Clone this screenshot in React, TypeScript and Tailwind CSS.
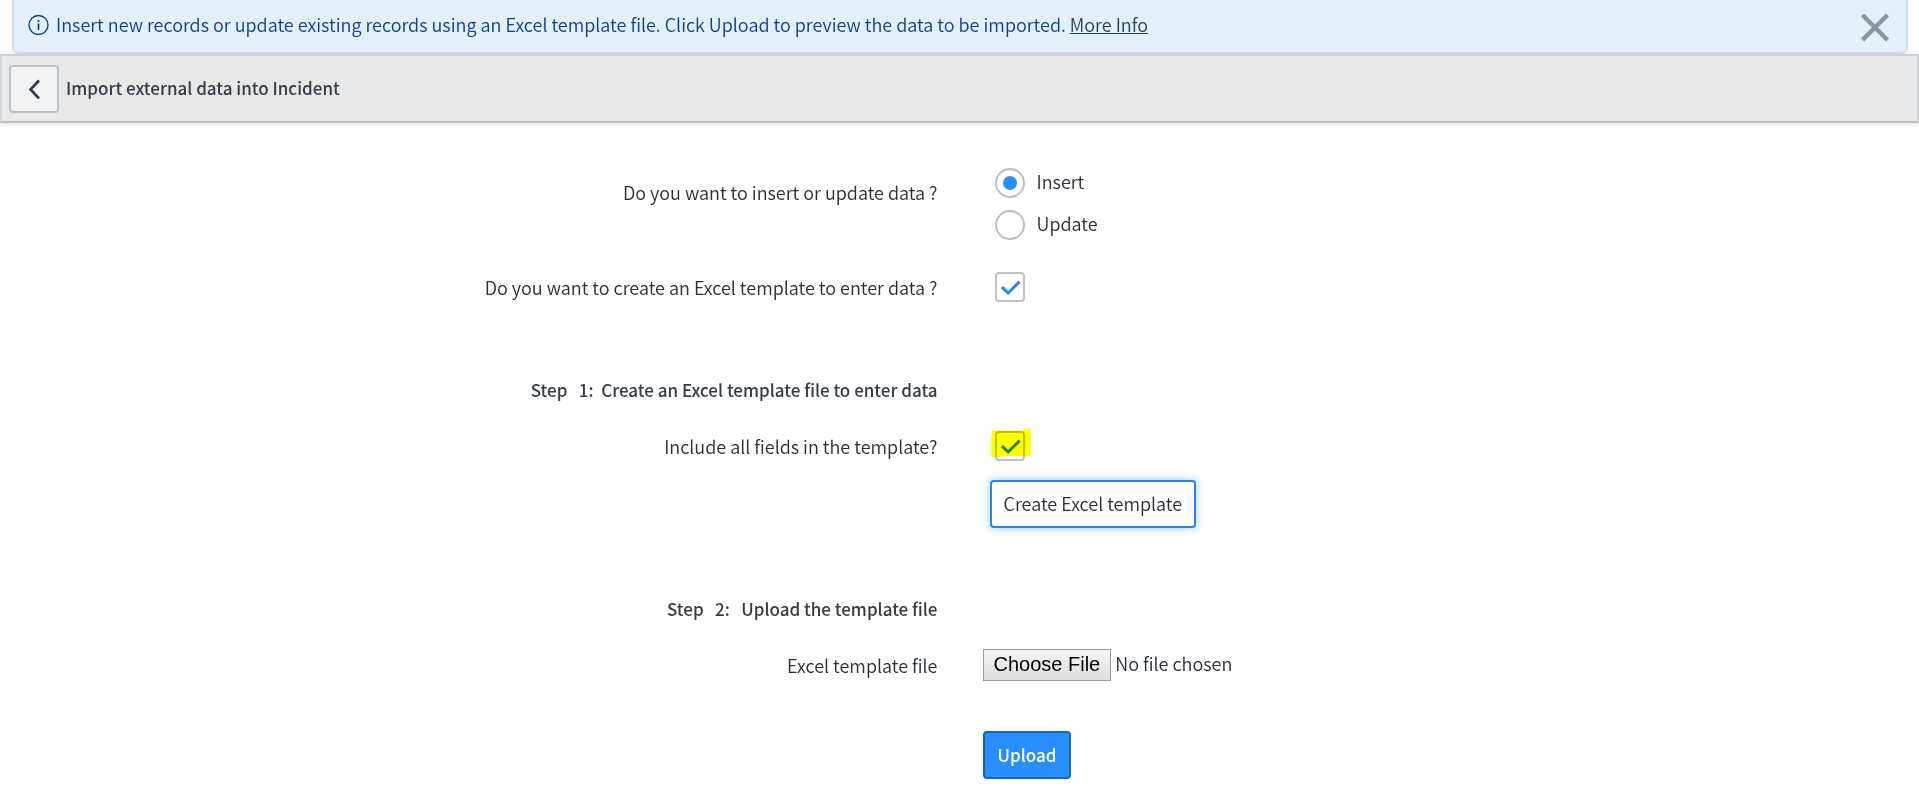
import React, { useState } from 'react';

interface CheckboxProps {
    id: string;
    checked: boolean;
    onToggle: () => void;
    highlighted?: boolean;
}

const Checkbox: React.FC<CheckboxProps> = ({ id, checked, onToggle, highlighted }) => {
    return (
        <span className="relative block h-[30px] w-[30px]">
            <input id={id} type="checkbox" checked={checked} onChange={onToggle}
                className="block h-[30px] w-[30px] cursor-pointer appearance-none rounded border-2 border-[#bdc0c4] bg-white" />
            {checked && (
                <svg viewBox="0 0 30 30" className="pointer-events-none absolute inset-0 h-[30px] w-[30px]" fill="none" stroke="#2d83ee" strokeWidth="3">
                    <path d="M7 15.2 L13.2 21 L24.6 9.6" />
                </svg>
            )}
            {highlighted && (
                <svg viewBox="0 0 40 28" className="pointer-events-none absolute -left-1 -top-0.5 h-7 w-10 mix-blend-multiply">
                    <path d="M1 1.5 H31 L33 0 H39.500 Q40.500 14 39.500 27 H12 L9 28 H0.500 Q-0.500 14 1 1.500Z" fill="#ffff00" />
                </svg>
            )}
        </span>
    );
};

interface RowProps {
    label: React.ReactNode;
    htmlFor?: string;
    children?: React.ReactNode;
}

const Row: React.FC<RowProps> = ({ label, htmlFor, children }) => (
    <div className="grid min-h-8 grid-cols-2 items-center">
        <label htmlFor={htmlFor} className="pr-[22px] text-right">{label}</label>
        <div className="pl-[23px]">{children}</div>
    </div>
);

const App: React.FC = () => {
    const [mode, setMode] = useState<string>('insert');
    const [createTemplate, setCreateTemplate] = useState<boolean>(true);
    const [allFields, setAllFields] = useState<boolean>(true);

    const modes = [
        { value: 'insert', text: 'Insert' },
        { value: 'update', text: 'Update' },
    ];

    return (
        <div className="min-h-screen bg-white font-['Noto_Sans_CJK_SC',sans-serif] text-[18px] font-[350] leading-6 text-[#262e38]">
            <div className="ml-3 mr-[11px] flex h-[54px] items-start justify-between rounded-b-md border-2 border-t-0 border-[#cfe0f5] bg-[#e4effa] pl-[14px] pr-4 text-[#0c3f8f]">
                <p className="flex items-center gap-[7px] pt-3">
                    <svg viewBox="0 0 21 21" className="h-[21px] w-[21px]" fill="none" stroke="currentColor">
                        <circle cx="10.500" cy="11" r="9.500" strokeWidth="1.300" />
                        <path d="M10.500 9.500 V16" strokeWidth="1.700" />
                        <path d="M10.500 6 V8" strokeWidth="1.700" />
                    </svg>
                    <span>
                        Insert new records or update existing records using an Excel template file. Click Upload to preview the data to be imported.{' '}
                        <a href="#" className="text-[#1f4456] underline">More Info</a>
                    </span>
                </p>
                <button type="button" title="Close" className="cursor-pointer pt-3">
                    <svg viewBox="0 0 30 30" className="h-[30px] w-[30px]" fill="none" stroke="#8b969f" strokeWidth="4.500">
                        <path d="M2.500 3 L27.500 28 M27.500 3 L2.500 28" />
                    </svg>
                </button>
            </div>

            <header className="flex h-[69px] items-center gap-[7px] border-2 border-b-[#bdc0c4] border-x-[#d0d4dc] border-t-[#cdd1da] bg-[#e6e8ea] px-[7px] shadow-[0_1px_4px_rgba(0,0,0,0.15)]">
                <button type="button" title="Back"
                    className="flex h-12 w-[50px] cursor-pointer items-center justify-center rounded border-2 border-[#bdc0c4] bg-[#f1f2f4]">
                    <svg viewBox="0 0 12 20" className="h-5 w-3" fill="none" stroke="#303a46" strokeWidth="2.600">
                        <path d="M11 1.500 L2.500 10.500 L11 19.500" />
                    </svg>
                </button>
                <h1 className="pb-0.5 text-[17px] font-medium text-[#343d47]">Import external data into Incident</h1>
            </header>

            <main className="pt-[45px]">
                <div className="grid grid-cols-2 items-start" role="radiogroup" aria-labelledby="mode-label">
                    <span id="mode-label" className="pr-[22px] pt-3 text-right">Do you want to insert or update data ?</span>
                    <div className="flex flex-col gap-3 pl-[35px]">
                        {modes.map(({ value, text }) => (
                            <label key={value} className="flex h-[30px] w-fit cursor-pointer items-center gap-3">
                                <span className="relative block h-[30px] w-[30px]">
                                    <input type="radio" name="mode" value={value} checked={mode === value} onChange={() => setMode(value)}
                                        className="block h-[30px] w-[30px] cursor-pointer appearance-none rounded-full border-2 border-[#bdc0c4] bg-white" />
                                    {mode === value && <span className="absolute inset-2 rounded-full bg-[#278efc]"></span>}
                                </span>
                                <span className="pb-1">{text}</span>
                            </label>
                        ))}
                    </div>
                </div>

                <div className="pt-[31px]">
                    <Row htmlFor="create-template" label="Do you want to create an Excel template to enter data ?">
                        <div className="pl-3">
                            <Checkbox id="create-template" checked={createTemplate} onToggle={() => setCreateTemplate(!createTemplate)} />
                        </div>
                    </Row>
                </div>

                <section className="pt-[75px]">
                    <h2 className="w-1/2 whitespace-pre pr-[22px] text-right text-[17px] font-medium text-[#343d47]">{'Step   1:  Create an Excel template file to enter data'}</h2>
                    <div className="pt-7">
                        <Row htmlFor="all-fields" label="Include all fields in the template?">
                            <div className="pl-3">
                                <Checkbox id="all-fields" checked={allFields} onToggle={() => setAllFields(!allFields)} highlighted />
                            </div>
                        </Row>
                    </div>
                    <div className="ml-[50%] pl-[30px] pt-[18px]">
                        <button type="button"
                            className="h-12 cursor-pointer rounded border-2 border-[#2d83e6] bg-white px-3 pb-0.5 shadow-[0_0_8px_rgba(39,142,252,0.5)]">
                            Create Excel template
                        </button>
                    </div>
                </section>

                <section className="pt-[69px]">
                    <h2 className="w-1/2 whitespace-pre pr-[22px] text-right text-[17px] font-medium text-[#343d47]">{'Step   2:   Upload the template file'}</h2>
                    <div className="pt-7">
                        <Row htmlFor="template-file" label="Excel template file">
                            <input id="template-file" type="file"
                                className="block h-8 w-full cursor-pointer file:mr-1 file:h-8 file:border file:border-solid file:border-[#9a9a9a] file:bg-linear-to-b file:from-[#f6f6f6] file:to-[#dddddd] file:px-[10px] file:pb-0.5 file:font-['Liberation_Sans',sans-serif] file:text-[20px] file:leading-6 file:text-black" />
                        </Row>
                    </div>
                    <div className="ml-[50%] pl-[23px] pt-[50px]">
                        <button type="button"
                            className="h-12 cursor-pointer rounded border-2 border-[#0f68c4] bg-[#278efc] px-[13px] text-[17px] font-medium text-white">
                            Upload
                        </button>
                    </div>
                </section>
            </main>
        </div>
    );
};

export default App;
